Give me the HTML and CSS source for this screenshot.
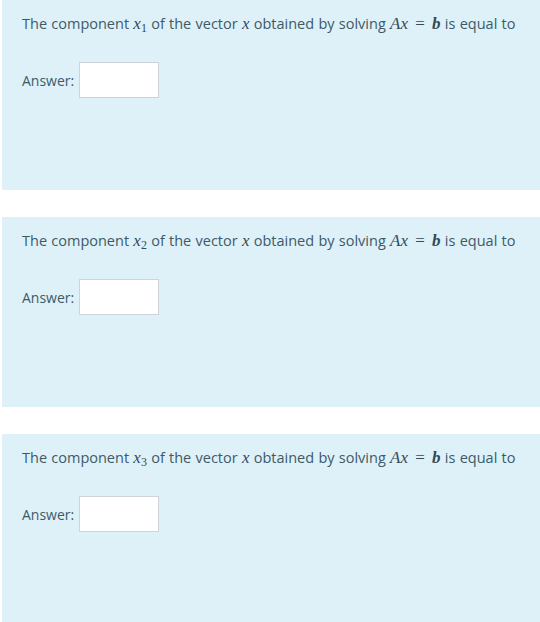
FILE: index.html
```html
<!DOCTYPE html>
<html lang="en">
<head>
    <meta charset="UTF-8">
    <title>Question</title>
    <link rel="stylesheet" href="styles.css">
</head>
<body>
    <div class="formulation">
        <p class="qtext">The component <span class="math"><i>x</i><sub>1</sub></span> of the vector <span class="math"><i>x</i></span> obtained by solving <span class="math"><i>Ax</i> <span class="eq">=</span> <i class="bold">b</i></span> is equal to</p>
        <div class="answer">
            <label for="ans1">Answer:</label>
            <input type="text" id="ans1">
        </div>
    </div>
    <div class="formulation">
        <p class="qtext">The component <span class="math"><i>x</i><sub>2</sub></span> of the vector <span class="math"><i>x</i></span> obtained by solving <span class="math"><i>Ax</i> <span class="eq">=</span> <i class="bold">b</i></span> is equal to</p>
        <div class="answer">
            <label for="ans2">Answer:</label>
            <input type="text" id="ans2">
        </div>
    </div>
    <div class="formulation">
        <p class="qtext">The component <span class="math"><i>x</i><sub>3</sub></span> of the vector <span class="math"><i>x</i></span> obtained by solving <span class="math"><i>Ax</i> <span class="eq">=</span> <i class="bold">b</i></span> is equal to</p>
        <div class="answer">
            <label for="ans3">Answer:</label>
            <input type="text" id="ans3">
        </div>
    </div>
</body>
</html>
```

FILE: styles.css
```css
body {
    margin: 0;
    padding-left: 2px;
    font-family: "Open Sans", sans-serif;
    font-size: 14.5px;
    color: #3d5a68;
    background-color: #ffffff;
}

.formulation {
    background-color: #def1f8;
    height: 190px;
    box-sizing: border-box;
    padding: 13px 20px;
    margin-bottom: 27px;
}

.qtext {
    margin: 0;
    line-height: 22px;
    white-space: nowrap;
    word-spacing: 0.5px;
}

.math {
    font-family: "Liberation Serif", serif;
    font-size: 17px;
    color: #34495a;
    word-spacing: 0;
}

.math i {
    font-style: italic;
}

.math .bold {
    font-weight: bold;
}

.math sub {
    font-style: normal;
    font-size: 12px;
    vertical-align: -3px;
}

.eq {
    padding: 0 3px;
}

.answer {
    display: flex;
    align-items: center;
    margin-top: 23px;
}

label {
    margin-right: 5px;
    font-size: 14px;
}

input {
    width: 80px;
    height: 36px;
    box-sizing: border-box;
    border: 1px solid #ced4da;
    background-color: #ffffff;
    padding: 4px 8px;
}
```
